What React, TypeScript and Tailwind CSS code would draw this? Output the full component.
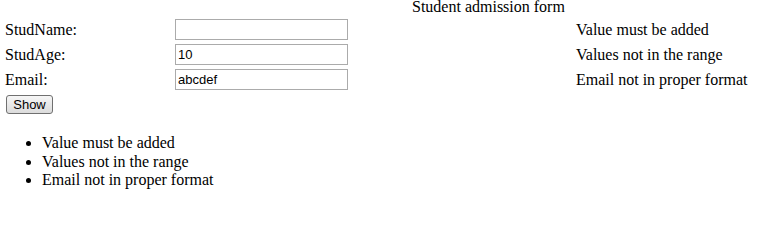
export default function App() {
  const rows = [
    { label: "StudName:", value: "", error: "Value must be added" },
    { label: "StudAge:", value: "10", error: "Values not in the range" },
    { label: "Email:", value: "abcdef", error: "Email not in proper format" },
  ];
  return (
    <div className="font-['Liberation_Serif',serif] text-[16px] text-black bg-white w-[760px] h-[228px] overflow-hidden">
      <div className="pl-[412px] -mt-[2px] leading-[18px] h-[18px]">Student admission form</div>
      <div className="mt-[1px] pl-[5px]">
        {rows.map((r) => (
          <div key={r.label} className="flex items-center h-[25px]">
            <div className="w-[170px] leading-[18px]">{r.label}</div>
            <input
              readOnly
              value={r.value}
              className="w-[173px] h-[21px] border border-[#ababab] px-[2px] font-['Liberation_Sans',sans-serif] text-[13px] text-black outline-none"
            />
            <div className="ml-[228px] leading-[18px]">{r.error}</div>
          </div>
        ))}
        <button className="mt-[3px] ml-[1px] w-[47px] h-[19px] border border-[#707070] rounded-[3px] bg-gradient-to-b from-[#f6f6f6] to-[#dcdcdc] font-['Liberation_Sans',sans-serif] text-[13px] leading-[15px] text-black flex items-center justify-center">
          Show
        </button>
      </div>
      <ul className="mt-[20px] pl-[42px] list-disc leading-[18.5px]">
        <li>Value must be added</li>
        <li>Values not in the range</li>
        <li>Email not in proper format</li>
      </ul>
    </div>
  );
}
